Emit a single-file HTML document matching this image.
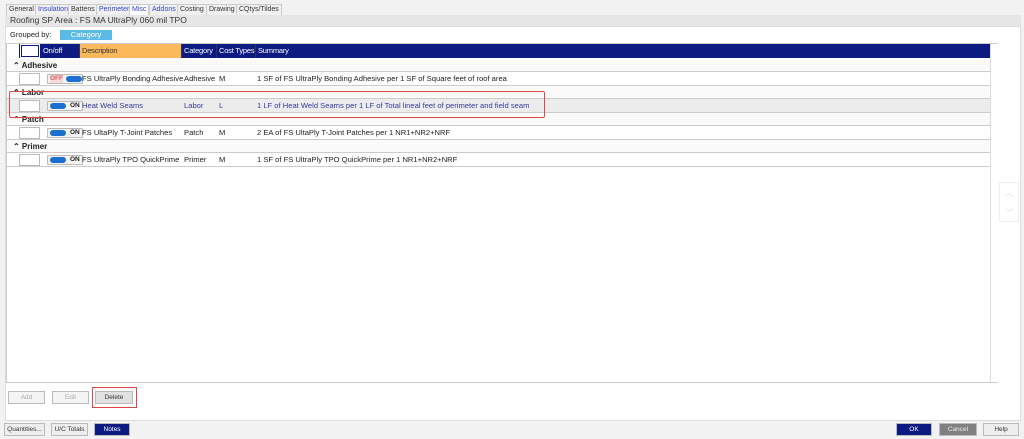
<!DOCTYPE html>
<html><head><style>
*{box-sizing:border-box;margin:0;padding:0}
body{width:1024px;height:439px;background:#f2f2f2;font-family:"Liberation Sans",sans-serif;font-size:7.5px;color:#222;position:relative;overflow:hidden}
.a{position:absolute}
.tab{position:absolute;top:4px;height:11px;border:1px solid #ccc;border-bottom:none;background:#f0f0f0;font-size:7px;line-height:10px;padding:0 2px;color:#333;white-space:nowrap}
.blue{color:#3344cc}
.hdr div{position:absolute;top:0;height:14px;line-height:14px;color:#fff;font-size:7.5px;padding-left:2px;border-right:1px solid #334;white-space:nowrap;overflow:hidden;letter-spacing:-0.2px}
.grp{position:absolute;left:7px;width:983px;height:13px;background:#fafafa;border-bottom:1px solid #ccc;font-weight:bold;font-size:8px;line-height:13px;padding-left:6px}
.row{position:absolute;left:7px;width:983px;height:14px;background:#fff;border-bottom:1px solid #ccc;line-height:14px;font-size:7.6px;white-space:nowrap}
.row span{position:absolute;top:0}
.tog{position:absolute;left:40px;top:2px;width:36px;height:10px;border:1px solid #bbb;background:#f4f4f4;border-radius:1px}
.tog i{position:absolute;top:1px;width:16px;height:6px;background:#1a6fd0;border-radius:3px}
.tog b{position:absolute;top:0;font-size:6.5px;line-height:8px}
.cb{position:absolute;left:12px;top:1px;width:21px;height:12px;border:1px solid #bbb;background:#fff}
.btn{position:absolute;height:13px;border:1px solid #bbb;background:#eee;font-size:6.5px;line-height:11px;text-align:center;color:#333}
</style></head><body>
<div class="tab" style="left:6px">General</div>
<div class="tab blue" style="left:35px">Insulation</div>
<div class="tab" style="left:68px">Battens</div>
<div class="tab blue" style="left:96px">Perimeter</div>
<div class="tab blue" style="left:129px;background:#fff">Misc</div>
<div class="tab blue" style="left:149px">Addons</div>
<div class="tab" style="left:177px">Costing</div>
<div class="tab" style="left:206px">Drawing</div>
<div class="tab" style="left:236px">CQtys/Tildes</div>
<div class="a" style="left:5px;top:15px;width:1016px;height:11px;background:#e6e6e6;font-size:8.5px;line-height:11px;padding-left:5px;color:#333">Roofing SP Area : FS MA UltraPly 060 mil TPO</div>
<div class="a" style="left:5px;top:26px;width:1016px;height:395px;background:#fff;border:1px solid #ddd"></div>
<div class="a" style="left:10px;top:30px;font-size:7.5px">Grouped by:</div>
<div class="a" style="left:60px;top:30px;width:52px;height:10px;background:#5bbbe6;color:#fff;font-size:7.5px;line-height:10px;text-align:center">Category</div>
<div class="a" style="left:6px;top:43px;width:992px;height:340px;border:1px solid #ccc;background:#fff"></div>
<div class="a hdr" style="left:7px;top:44px;width:983px;height:14px;background:#0c1a82">
<div style="left:0;width:12px;background:#fff;border:none"></div>
<div style="left:13px;width:20px;border:1px solid #fff;background:#0c1a82"><span style="position:absolute;left:1px;top:1px;width:16px;height:10px;background:#fff"></span></div>
<div style="left:34px;width:39px">On/off</div>
<div style="left:73px;width:102px;background:#fcb95c;color:#333">Description</div>
<div style="left:175px;width:35px">Category</div>
<div style="left:210px;width:39px">Cost Types</div>
<div style="left:249px;width:734px;border:none">Summary</div>
</div>
<div class="a" style="left:990px;top:44px;width:8px;height:338px;background:#fff;border-left:1px solid #ddd"></div>

<div class="grp" style="top:59px">⌃ Adhesive</div>
<div class="row" style="top:72px"><div class="cb"></div><div class="tog"><b style="left:2px;top:0;color:#e06060;background:#f8d8d8">OFF</b><i style="left:18px"></i></div><span style="left:75px">FS UltraPly Bonding Adhesive</span><span style="left:177px">Adhesive</span><span style="left:212px">M</span><span style="left:250px">1 SF of FS UltraPly Bonding Adhesive per 1 SF of Square feet of roof area</span></div>
<div class="grp" style="top:86px">⌃ Labor</div>
<div class="row" style="top:99px;background:#ececec;color:#3a3aa0"><div class="cb"></div><div class="tog"><i style="left:2px"></i><b style="left:22px;color:#222">ON</b></div><span style="left:75px">Heat Weld Seams</span><span style="left:177px">Labor</span><span style="left:212px">L</span><span style="left:250px">1 LF of Heat Weld Seams per 1 LF of Total lineal feet of perimeter and field seam</span></div>
<div class="grp" style="top:113px">⌃ Patch</div>
<div class="row" style="top:126px"><div class="cb"></div><div class="tog"><i style="left:2px"></i><b style="left:22px">ON</b></div><span style="left:75px">FS UltaPly T-Joint Patches</span><span style="left:177px">Patch</span><span style="left:212px">M</span><span style="left:250px">2 EA of FS UltaPly T-Joint Patches per 1 NR1+NR2+NRF</span></div>
<div class="grp" style="top:140px">⌃ Primer</div>
<div class="row" style="top:153px"><div class="cb"></div><div class="tog"><i style="left:2px"></i><b style="left:22px">ON</b></div><span style="left:75px">FS UltraPly TPO QuickPrime</span><span style="left:177px">Primer</span><span style="left:212px">M</span><span style="left:250px">1 SF of FS UltraPly TPO QuickPrime per 1 NR1+NR2+NRF</span></div>
<div class="a" style="left:9px;top:91px;width:536px;height:27px;border:1.5px solid #e04848;border-radius:2px;z-index:5"></div>

<div class="a" style="left:999px;top:182px;width:20px;height:40px;border:1px solid #eee;color:#ddd;font-size:9px;text-align:center;line-height:20px">︿<br>﹀</div>

<div class="btn" style="left:8px;top:391px;width:37px;color:#aaa;background:#f4f4f4">Add</div>
<div class="btn" style="left:52px;top:391px;width:37px;color:#aaa;background:#f4f4f4">Edit</div>
<div class="btn" style="left:95px;top:391px;width:38px;background:#e2e2e2">Delete</div>
<div class="a" style="left:92px;top:387px;width:45px;height:21px;border:1.5px solid #e04848"></div>

<div class="btn" style="left:4px;top:423px;width:41px">Quantities...</div>
<div class="btn" style="left:51px;top:423px;width:37px">U/C Totals</div>
<div class="btn" style="left:94px;top:423px;width:36px;background:#0c1a82;color:#fff">Notes</div>
<div class="btn" style="left:896px;top:423px;width:36px;background:#0c1a82;color:#fff">OK</div>
<div class="btn" style="left:939px;top:423px;width:38px;background:#808080;color:#eee">Cancel</div>
<div class="btn" style="left:983px;top:423px;width:36px">Help</div>
</body></html>
